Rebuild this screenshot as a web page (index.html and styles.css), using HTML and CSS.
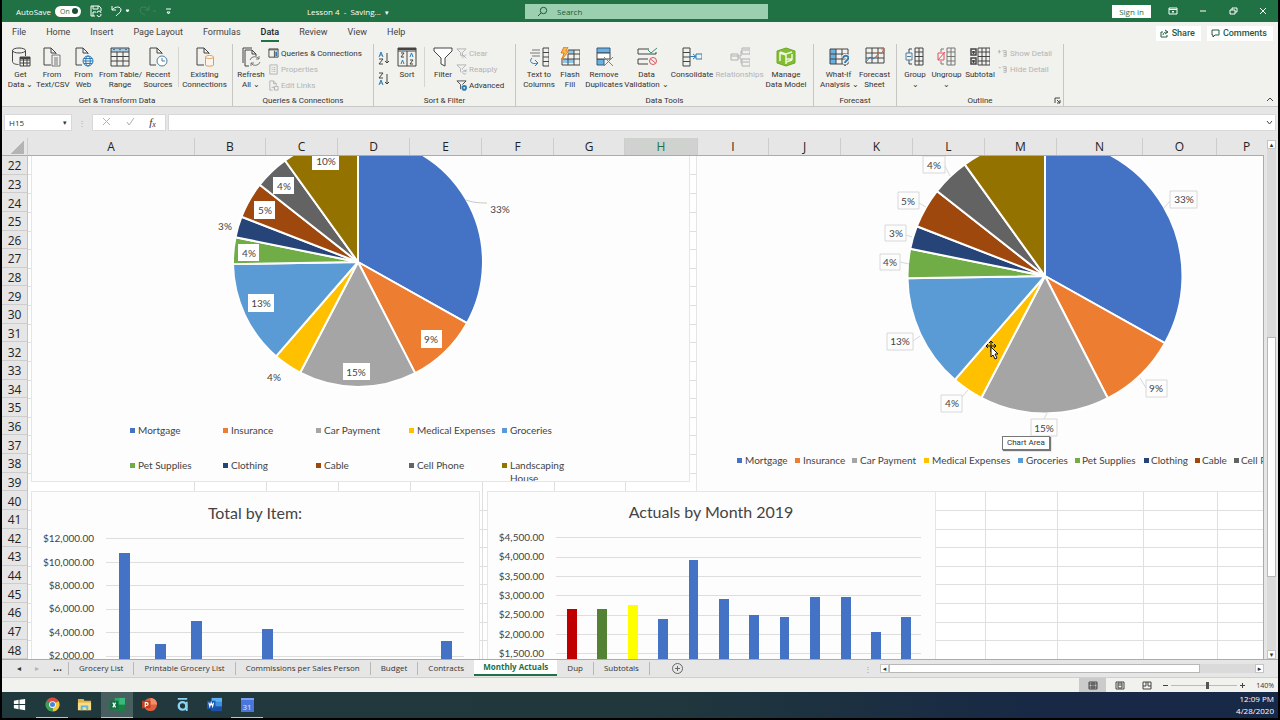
FILE: index.html
```
<!DOCTYPE html>
<html lang="en">

<head>
    <meta charset="UTF-8">
    <title>Lesson 4 - Excel</title>
    <link rel="stylesheet" href="styles.css">
</head>

<body>
    <header class="titlebar">
        <div class="quick-access">
            <label for="autosave">AutoSave</label>
            <span class="switch">On <input type="checkbox" id="autosave" checked></span>
            <button aria-label="Save"><svg width="12" height="12" viewBox="0 0 12 12"><path d="M1 1h8l2 2v3M1 1v10h4M3 1v3h5V1M3 11V7h3M7 8a2 2 0 0 1 4 0M11 9a2 2 0 0 1-4 1"/></svg></button>
            <button class="undo" aria-label="Undo"><svg width="19" height="12" viewBox="0 0 19 12"><path d="M1 1v4h4M1 5c3-4 9-4 9 0 0 3-4 4-5 6"/><path d="M15 5l1.500 2 1.500-2z" fill="#fff"/></svg></button>
            <button class="redo" aria-label="Redo" disabled><svg width="17" height="12" viewBox="0 0 17 12"><path d="M10 1v4H6M10 5C7 1 1 1 1 5c0 3 3 4 5 5M14 6h3"/></svg></button>
            <button aria-label="Customize"><svg width="7" height="7" viewBox="0 0 7 7"><path d="M1 1h5M2 4l1.500 2L5 4z"/></svg></button>
            <span class="doc-name">Lesson 4 &nbsp;-&nbsp; Saving... &nbsp;<small>▾</small></span>
        </div>
        <div class="search">
            <svg width="11" height="11" viewBox="0 0 11 11"><circle cx="6.500" cy="4.500" r="3.200"/><path d="M4 7l-3 3"/></svg>
            <input type="search" placeholder="Search" aria-label="Search">
        </div>
        <div class="window-controls">
            <button class="sign-in">Sign in</button>
            <button aria-label="Ribbon display options"><svg width="10" height="10" viewBox="0 0 10 10"><path d="M1 2h8v6H1zM1 3.500h8M5 7V5M4 6l1-1 1 1"/></svg></button>
            <button aria-label="Minimize"><svg width="10" height="10" viewBox="0 0 10 10"><path d="M2 5h6"/></svg></button>
            <button aria-label="Restore"><svg width="10" height="10" viewBox="0 0 10 10"><path d="M2 4h5v4H2zM4 4V2h5v4H7"/></svg></button>
            <button aria-label="Close"><svg width="10" height="10" viewBox="0 0 10 10"><path d="M2 2l6 6M8 2l-6 6"/></svg></button>
        </div>
    </header>

    <nav class="menu">
        <button>File</button>
        <button>Home</button>
        <button>Insert</button>
        <button>Page Layout</button>
        <button>Formulas</button>
        <button class="active">Data</button>
        <button>Review</button>
        <button>View</button>
        <button>Help</button>
        <div class="menu-right">
            <button class="share"><svg width="9" height="9" viewBox="0 0 9 9"><path d="M3 3H1v5h6V6M3 6c0-2 2-3 4-3M5 1l3 2-3 2"/></svg>Share</button>
            <button class="share"><svg width="9" height="9" viewBox="0 0 9 9"><path d="M1 1h7v5H4L2 8V6H1z"/></svg>Comments</button>
        </div>
    </nav>

    <div class="ribbon">
        <section class="group">
            <div class="tools tools-get">
                <button class="tool"><svg viewBox="0 0 20 20"><ellipse cx="8" cy="3.500" rx="6.500" ry="2.500"/><path d="M1.500 3.500v11c0 2 3 3 6 3M14.500 3.500V9"/><path d="M9 10h10v9H9zM9 13h10M9 16h10M12.500 10v9M16 10v9"/><path d="M9 11h10" stroke-width="2"/></svg>Get<br>Data <i>⌄</i></button>
                <button class="tool"><svg viewBox="0 0 20 20"><path d="M9 18H2V1h7l5 5v1M9 1v5h5"/><path class="gray" d="M10 8h8v11h-8zM12 11h4M12 13h4M12 15h4M12 17h4"/></svg>From<br>Text/CSV</button>
                <button class="tool"><svg viewBox="0 0 20 20"><path d="M8 18H2V1h7l5 5v1M9 1v5h5"/><g class="blue"><circle cx="14" cy="14" r="5"/><ellipse cx="14" cy="14" rx="2.200" ry="5"/><path d="M9 14h10M10 11.500h8M10 16.500h8"/></g></svg>From<br>Web</button>
                <button class="tool"><svg viewBox="0 0 20 20"><path fill="#a5cde8" stroke="none" d="M1 1h18v4H1z"/><path d="M1 1h18v18H1zM1 5h18M1 9.500h18M1 14h18M7 5v14M13 5v14"/><path class="blue" d="M3 2l1 1 1-1M9 2l1 1 1-1M15 2l1 1 1-1"/></svg>From Table/<br>Range</button>
                <button class="tool"><svg viewBox="0 0 20 20"><path d="M8 18H2V1h7l5 5v1M9 1v5h5"/><circle class="steel" cx="14" cy="14" r="5" fill="#fff"/><path class="steel" d="M14 11v3h3"/></svg>Recent<br>Sources</button>
                <span class="divider"></span>
                <button class="tool"><svg viewBox="0 0 20 20"><path d="M9 18H2V1h7l5 5v1M9 1v5h5"/><path d="M10.500 10v8c0 1.500 8 1.500 8 0v-8" stroke="#e59a4c" fill="#fbf4ec"/><ellipse cx="14.500" cy="10" rx="4" ry="1.500" stroke="#e59a4c" fill="#fff"/></svg>Existing<br>Connections</button>
            </div>
            <h2>Get &amp; Transform Data</h2>
        </section>
        <section class="group">
            <div class="tools tools-query">
                <button class="tool"><svg viewBox="0 0 20 20"><path d="M2 16V1h9M8 19H4V3h7l4 4v2M11 3v4h4"/><g class="gray"><path d="M9 13a5 5 0 0 1 9-1M18 9v3h-3M19 15a5 5 0 0 1-9 1M10 19v-3h3"/></g></svg>Refresh<br>All <i>⌄</i></button>
                <div class="small-tools">
                    <button><svg viewBox="0 0 12 12"><path d="M1 1h10v9H1zM1 2h10M7 3v7"/><path fill="#2b7cb8" stroke="none" d="M8 4h2v5H8z"/></svg>Queries &amp; Connections</button>
                    <button disabled><svg viewBox="0 0 12 12"><path d="M2 1h8v10H2zM4 4h1M4 6h1M4 8h1M6 4h2M6 6h2M6 8h2"/></svg>Properties</button>
                    <button disabled><svg viewBox="0 0 12 12"><path d="M5 11H2V1h4l3 3v2M4 8h3v3M7 7h4v4H7zM6 1v3h3"/></svg>Edit Links</button>
                </div>
            </div>
            <h2>Queries &amp; Connections</h2>
        </section>
        <section class="group">
            <div class="tools tools-sort">
                <div class="sort-pair">
                    <button aria-label="Sort A to Z"><svg viewBox="0 0 12 14"><path class="blue" d="M1 6l2-5 2 5M2 4h2"/><path d="M1 8h4l-4 5h4M9 2v10M7 10l2 2 2-2"/></svg></button>
                    <button aria-label="Sort Z to A"><svg viewBox="0 0 12 14"><path class="blue" d="M1 13l2-5 2 5M2 11h2"/><path d="M1 1h4L1 6h4M9 2v10M7 10l2 2 2-2"/></svg></button>
                </div>
                <button class="tool"><svg viewBox="0 0 20 20"><path d="M1 1h18v18H1zM1 4h18M10 4v15"/><path d="M1 2h18" stroke-width="2"/><path d="M4 6h3l-3 4h3M13 13h3l-3 4h3"/><path class="blue" d="M4 17l1.500-4L7 17M13 10l1.500-4 1.500 4"/></svg>Sort</button>
                <span class="divider"></span>
                <button class="tool"><svg viewBox="0 0 20 20"><path fill="#fff" d="M1 1h18v3l-7 7v8l-4-2v-6L1 4z"/></svg>Filter</button>
                <div class="small-tools">
                    <button disabled><svg viewBox="0 0 12 12"><path d="M1 1h10L7 5v4L5 8V5zM7 7l4 4M11 7l-4 4"/></svg>Clear</button>
                    <button disabled><svg viewBox="0 0 12 12"><path d="M1 1h10L7 5v1M5 9V5L1 1M11 8a2 2 0 1 0 0 2M11 6v2H9"/></svg>Reapply</button>
                    <button><svg viewBox="0 0 12 12"><path d="M1 1h10L7 5M5 10V5L1 1"/><circle cx="9" cy="8.500" r="2" stroke="#2b7cb8" stroke-width="2"/><path class="blue" d="M7 11h4"/></svg>Advanced</button>
                </div>
            </div>
            <h2>Sort &amp; Filter</h2>
        </section>
        <section class="group">
            <div class="tools tools-data">
                <button class="tool"><svg viewBox="0 0 20 20"><path class="gray" d="M3 3h8M1 6h10M3 9h8"/><path class="blue" d="M3 11c-4 4 1 7 6 5M6 13l3 3-3 3"/><path d="M14 1h6v18h-6zM14 5.500h6M14 10h6M14 14.500h6"/></svg>Text to<br>Columns</button>
                <button class="tool"><svg viewBox="0 0 20 20"><path fill="#8ec7ec" stroke="none" d="M8 3h6v4H8zM3 12h11v4H3z"/><path d="M2 11v7h18V3H8M3 12h17M8 7h12M8 7v11M14 3v15"/><path fill="#f7b84b" stroke="#df7d1e" d="M4 0h4L6 4h3l-7 8 2-6H1z"/></svg>Flash<br>Fill</button>
                <button class="tool"><svg viewBox="0 0 20 20"><path fill="#68b1e3" stroke="#37597a" d="M3 1h13v5H3zM3 12h7v6H3z"/><path d="M3 6h13v6H3z" fill="#fff"/><path class="red" d="M10 10l9 9M19 10l-9 9"/></svg>Remove<br>Duplicates</button>
                <button class="tool"><svg viewBox="0 0 20 20"><path d="M12 2H1v5h18V5M11 12H1v5h10"/><path d="M11 3l3 3 6-5" stroke="#3d8c6c"/><g class="red"><circle cx="16" cy="14" r="3.500"/><path d="M13.500 12l5 4"/></g></svg>Data<br>Validation <i>⌄</i></button>
                <button class="tool"><svg viewBox="0 0 20 20"><path d="M1 1h7v18H1zM1 5.500h7M1 10h7M1 14.500h7"/><path class="blue" d="M8 9.500h5M11 7l3 2.500-3 2.500M14 7h6v5h-6z"/></svg>Consolidate</button>
                <button class="tool" disabled><svg viewBox="0 0 20 20"><path d="M1 7h7v6H1zM12 1h8v6h-8zM12 12h8v7h-8zM8 9h3V4h1M8 11h3v5h1M13 3h6M13 15h6M1 9h7"/></svg>Relationships</button>
                <button class="tool"><svg viewBox="0 0 20 20"><path d="M1 4l9-3 9 3v12l-9 3-9-3z" fill="#83bd32" stroke="#6fa928"/><path stroke="#eef8df" stroke-width="1.500" d="M4 5l6 2 6-2M4 14V6l6 2v9M10 12h6V7M10 15l6-2"/></svg>Manage<br>Data Model</button>
            </div>
            <h2>Data Tools</h2>
        </section>
        <section class="group">
            <div class="tools tools-forecast">
                <button class="tool"><svg viewBox="0 0 20 20"><path fill="#68b1e3" stroke="none" d="M1 2h6v15H1z"/><path d="M1 2h18v15H1zM1 7h18M1 12h18M7 2v15M13 2v15"/><path stroke="#f1f1ee" stroke-width="4" d="M14 11c1-4 7-2 5 1-1 2-3 2-3 5"/><path class="blue" stroke-width="2" d="M14 11c1-4 7-2 5 1-1 2-3 2-3 4M16 18v1"/></svg>What-If<br>Analysis <i>⌄</i></button>
                <button class="tool"><svg viewBox="0 0 20 20"><path d="M1 1h18v15H1zM1 6h18M1 11h18M7 1v15M13 1v15"/><path class="blue" d="M1 15l4-5 3 2 4-3"/><path stroke="#d8664b" d="M11 10l3-5 2 2 3-5M16 2h3v3"/></svg>Forecast<br>Sheet</button>
            </div>
            <h2>Forecast</h2>
        </section>
        <section class="group">
            <div class="tools tools-outline">
                <button class="tool"><svg viewBox="0 0 20 20"><path d="M10 1h8v17h-8zM10 5h8M10 9.500h8M10 14h8M14 1v17M7 2H4v4M7 17H4v-4"/><path class="steel" d="M1 6h6v7H1zM2 9.500h4"/></svg>Group<br><i>⌄</i></button>
                <button class="tool"><svg viewBox="0 0 20 20"><path class="gray" d="M10 1h8v17h-8zM10 5h8M10 9.500h8M10 14h8M14 1v17M7 2H4v3M7 17H4v-3"/><path class="red" d="M1 6h6v7H1zM1 13l7-8"/></svg>Ungroup<br><i>⌄</i></button>
                <button class="tool"><svg viewBox="0 0 20 20"><path d="M8 1h12v17H8zM8 5h12M8 9.500h12M8 14h12M12 1v17M16 1v17"/><path d="M1 2h5v6H1zM1 11h5v6H1zM2 5h3M3.500 4v3M2 14h3M3.500 13v3" stroke-width="1.500"/></svg>Subtotal</button>
                <div class="small-tools">
                    <button disabled><svg viewBox="0 0 12 12"><path d="M1 4h3M2.500 2v4M6 3h4v2H7M10 5v4H7M7 7h3"/></svg>Show Detail</button>
                    <button disabled><svg viewBox="0 0 12 12"><path d="M2 4h2M6 3h4v2H7M10 5v4H7M7 7h3"/></svg>Hide Detail</button>
                </div>
            </div>
            <h2>Outline</h2>
            <button class="launcher" aria-label="Outline settings"><svg width="7" height="7" viewBox="0 0 7 7"><path d="M6 1H1v5M3 3l3 3M6 3v3H3"/></svg></button>
        </section>
        <button class="collapse" aria-label="Collapse the ribbon"><svg width="8" height="6" viewBox="0 0 8 6"><path d="M1 5l3-3 3 3"/></svg></button>
    </div>

    <div class="formula-bar">
        <div class="name-box">
            <input type="text" value="H15" aria-label="Name box">
            <small>▾</small>
        </div>
        <span class="grip">⋮</span>
        <div class="formula-buttons">
            <button aria-label="Cancel" disabled><svg width="9" height="9" viewBox="0 0 9 9"><path d="M1 1l7 7M8 1L1 8"/></svg></button>
            <button aria-label="Enter" disabled><svg width="9" height="9" viewBox="0 0 9 9"><path d="M1 5l2 3 5-7"/></svg></button>
            <button class="fx">f<sub>x</sub></button>
        </div>
        <div class="formula">
            <input type="text" aria-label="Formula">
            <svg width="7" height="6" viewBox="0 0 7 6"><path d="M1 1l2.500 3L6 1"/></svg>
        </div>
    </div>

    <main class="workbook">
        <div class="corner"></div>
        <div class="columns">
            <span>A</span><span>B</span><span>C</span><span>D</span><span>E</span><span>F</span><span>G</span><span class="selected">H</span><span>I</span><span>J</span><span>K</span><span>L</span><span>M</span><span>N</span><span>O</span><span>P</span>
        </div>
        <div class="scroll-y">
            <button aria-label="Scroll up">▴</button>
            <div class="track"><div class="thumb"></div></div>
            <button aria-label="Scroll down">▾</button>
        </div>
        <div class="rows">
            <span>22</span><span>23</span><span>24</span><span>25</span><span>26</span><span>27</span><span>28</span><span>29</span><span>30</span>
            <span>31</span><span>32</span><span>33</span><span>34</span><span>35</span><span>36</span><span>37</span><span>38</span><span>39</span>
            <span>40</span><span>41</span><span>42</span><span>43</span><span>44</span><span>45</span><span>46</span><span>47</span><span>48</span>
        </div>
        <div class="sheet">
            <svg class="gridlines" width="1236" height="503" viewBox="28 156 1236 503">
                <path d="M28 174H1264M28 193H1264M28 212H1264M28 231H1264M28 249H1264M28 268H1264M28 286H1264M28 305H1264M28 324H1264M28 342H1264M28 361H1264M28 380H1264M28 398H1264M28 417H1264M28 435H1264M28 454H1264M28 473H1264M28 510H1264M28 529H1264M28 547H1264M28 566H1264M28 584H1264M28 603H1264M28 622H1264M28 640H1264"/>
                <path d="M194 156V659M266 156V659M338 156V659M410 156V659M482 156V659M554 156V659M625 156V659M697 156V659M769 156V659M841 156V659M913 156V659M985 156V659M1057 156V659M1143 156V659M1217 156V659"/>
            </svg>

            <!-- pie, labels with white boxes -->
            <svg class="chart chart-pie-left" width="657" height="325" viewBox="32 156 657 325">
                <defs>
                    <g id="slices" class="slices">
                        <path fill="#4472c4" d="M0 0V-100A100 100 0 0 1 87.200 48.900Z"/>
                        <path fill="#ed7d31" d="M0 0L87.200 48.900A100 100 0 0 1 45.700 88.900Z"/>
                        <path fill="#a5a5a5" d="M0 0L45.700 88.900A100 100 0 0 1 -46.300 88.600Z"/>
                        <path fill="#ffc000" d="M0 0L-46.300 88.600A100 100 0 0 1 -65.600 75.500Z"/>
                        <path fill="#5b9bd5" d="M0 0L-65.600 75.500A100 100 0 0 1 -100 1.700Z"/>
                        <path fill="#70ad47" d="M0 0L-100 1.700A100 100 0 0 1 -98 -19.800Z"/>
                        <path fill="#264478" d="M0 0L-98 -19.800A100 100 0 0 1 -93.200 -36.200Z"/>
                        <path fill="#9e480e" d="M0 0L-93.200 -36.200A100 100 0 0 1 -78.600 -61.800Z"/>
                        <path fill="#636363" d="M0 0L-78.600 -61.800A100 100 0 0 1 -58.400 -81.200Z"/>
                        <path fill="#937200" d="M0 0L-58.400 -81.200A100 100 0 0 1 0 -100Z"/>
                    </g>
                </defs>
                <use href="#slices" transform="translate(358 262) scale(1.250)"/>
                <path class="leader" d="M466 200c5 2 12 3 21 3"/>
                <g class="tags">
                    <path d="M312 152h27v18h-27zM273 177h21v17h-21zM254 201h21v18h-21zM238 244h21v17h-21zM248 294h26v18h-26zM343 363h27v17h-27zM421 330h21v18h-21z"/>
                </g>
                <g class="labels">
                    <text x="326" y="165">10%</text>
                    <text x="284" y="190">4%</text>
                    <text x="265" y="214">5%</text>
                    <text x="225" y="230">3%</text>
                    <text x="249" y="257">4%</text>
                    <text x="261" y="307">13%</text>
                    <text x="274" y="381">4%</text>
                    <text x="356" y="376">15%</text>
                    <text x="431" y="343">9%</text>
                    <text x="500" y="213">33%</text>
                </g>
                <g class="legend">
                    <rect x="130" y="428" fill="#4472c4"/><text x="138" y="434">Mortgage</text>
                    <rect x="223" y="428" fill="#ed7d31"/><text x="231" y="434">Insurance</text>
                    <rect x="316" y="428" fill="#a5a5a5"/><text x="324" y="434">Car Payment</text>
                    <rect x="409" y="428" fill="#ffc000"/><text x="417" y="434">Medical Expenses</text>
                    <rect x="502" y="428" fill="#5b9bd5"/><text x="510" y="434">Groceries</text>
                    <rect x="130" y="463" fill="#70ad47"/><text x="138" y="469">Pet Supplies</text>
                    <rect x="223" y="463" fill="#264478"/><text x="231" y="469">Clothing</text>
                    <rect x="316" y="463" fill="#9e480e"/><text x="324" y="469">Cable</text>
                    <rect x="409" y="463" fill="#636363"/><text x="417" y="469">Cell Phone</text>
                    <rect x="502" y="463" fill="#937200"/><text x="510" y="469">Landscaping<tspan x="510" y="482">House</tspan></text>
                </g>
            </svg>

            <!-- pie, labels as callouts -->
            <svg class="chart chart-pie-right" width="680" height="335" viewBox="697 156 680 335">
                <use href="#slices" transform="translate(1045 276) scale(1.375)"/>
                <g class="callouts">
                    <path d="M923 156h22v17h-22zM945 166l5 10M898 192h21v17h-21zM919 203l7 4M885 225h21v16h-21zM906 235l6 2M880 254h20v16h-20zM900 262l9 2M887 333h26v17h-26zM913 341l7-5M941 395h21v17h-21zM962 397l6-7M1031 419h26v17h-26zM1044 419l3-6M1146 380h21v17h-21zM1146 388l-6-10M1170 191h27v17h-27zM1170 201l-6 7"/>
                </g>
                <g class="labels">
                    <text x="934" y="169">4%</text>
                    <text x="908" y="205">5%</text>
                    <text x="896" y="237">3%</text>
                    <text x="890" y="266">4%</text>
                    <text x="900" y="345">13%</text>
                    <text x="952" y="407">4%</text>
                    <text x="1044" y="432">15%</text>
                    <text x="1156" y="392">9%</text>
                    <text x="1184" y="203">33%</text>
                </g>
                <g class="legend">
                    <rect x="737" y="458" fill="#4472c4"/><text x="745" y="464">Mortgage</text>
                    <rect x="795" y="458" fill="#ed7d31"/><text x="803" y="464">Insurance</text>
                    <rect x="852" y="458" fill="#a5a5a5"/><text x="860" y="464">Car Payment</text>
                    <rect x="924" y="458" fill="#ffc000"/><text x="932" y="464">Medical Expenses</text>
                    <rect x="1018" y="458" fill="#5b9bd5"/><text x="1026" y="464">Groceries</text>
                    <rect x="1075" y="458" fill="#70ad47"/><text x="1082" y="464">Pet Supplies</text>
                    <rect x="1144" y="458" fill="#264478"/><text x="1151" y="464">Clothing</text>
                    <rect x="1195" y="458" fill="#9e480e"/><text x="1202" y="464">Cable</text>
                    <rect x="1234" y="458" fill="#636363"/><text x="1241" y="464">Cell Phone</text>
                </g>
            </svg>

            <svg class="chart chart-item" width="447" height="167" viewBox="32 492 447 167">
                <text class="chart-title" x="255" y="519">Total by Item:</text>
                <path class="axis" d="M106 538H464M106 562H464M106 585H464M106 609H464M106 632H464M106 656H464"/>
                <g class="values">
                    <text x="94" y="542">$12,000.00</text>
                    <text x="94" y="566">$10,000.00</text>
                    <text x="94" y="589">$8,000.00</text>
                    <text x="94" y="612">$6,000.00</text>
                    <text x="94" y="636">$4,000.00</text>
                    <text x="94" y="659">$2,000.00</text>
                </g>
                <path fill="#4472c4" d="M119 553h11v110h-11zM155 644h11v20h-11zM191 621h11v40h-11zM262 629h11v40h-11zM441 641h11v30h-11z"/>
            </svg>

            <svg class="chart chart-month" width="447" height="167" viewBox="488 492 447 167">
                <text class="chart-title" x="711" y="518">Actuals by Month 2019</text>
                <path class="axis" d="M556 537H921M556 557H921M556 576H921M556 595H921M556 615H921M556 634H921M556 653H921"/>
                <g class="values">
                    <text x="544" y="541">$4,500.00</text>
                    <text x="544" y="560">$4,000.00</text>
                    <text x="544" y="580">$3,500.00</text>
                    <text x="544" y="599">$3,000.00</text>
                    <text x="544" y="618">$2,500.00</text>
                    <text x="544" y="638">$2,000.00</text>
                    <text x="544" y="657">$1,500.00</text>
                </g>
                <path fill="#c00000" d="M567 609h10v60h-10z"/>
                <path fill="#548235" d="M597 609h10v60h-10z"/>
                <path fill="#ffff00" d="M628 605h10v60h-10z"/>
                <path fill="#4472c4" d="M658 619h10v60h-10zM689 560h9v110h-9zM719 599h10v70h-10zM749 615h10v60h-10zM780 617h9v60h-9zM810 597h10v70h-10zM841 597h10v70h-10zM871 632h10v40h-10zM901 617h10v60h-10z"/>
            </svg>

            <div class="tooltip">Chart Area</div>
            <svg class="cursor" width="16" height="20" viewBox="0 0 16 20">
                <path d="M6 1v11M1 6h10M4 3l2-2 2 2M3 4L1 6l2 2M9 4l2 2-2 2" stroke="#111"/>
                <path d="M6 7v10l2-2 2 4 2-1-2-4h3z" fill="#fff" stroke="#111"/>
            </svg>
        </div>
    </main>

    <div class="sheet-tabs">
        <div class="tab-nav">
            <button aria-label="Previous sheet">◂</button>
            <button aria-label="Next sheet" disabled>▸</button>
            <button aria-label="More sheets"><b>...</b></button>
        </div>
        <button class="tab">Grocery List</button>
        <button class="tab">Printable Grocery List</button>
        <button class="tab">Commissions per Sales Person</button>
        <button class="tab">Budget</button>
        <button class="tab">Contracts</button>
        <button class="tab active">Monthly Actuals</button>
        <button class="tab">Dup</button>
        <button class="tab">Subtotals</button>
        <button class="add" aria-label="New sheet"><svg width="11" height="11" viewBox="0 0 11 11"><circle cx="5.500" cy="5.500" r="5"/><path d="M3 5.500h5M5.500 3v5"/></svg></button>
        <span class="grip">⋮</span>
        <div class="scroll-x">
            <button aria-label="Scroll left">◂</button>
            <div class="track"><div class="thumb"></div></div>
            <button aria-label="Scroll right">▸</button>
        </div>
    </div>

    <div class="statusbar">
        <button class="view active" aria-label="Normal"><svg width="10" height="9" viewBox="0 0 10 9"><path d="M1 1h8v7H1zM1 3h8M1 6h8M4 1v7M6 1v7"/></svg></button>
        <button class="view" aria-label="Page layout"><svg width="10" height="9" viewBox="0 0 10 9"><path d="M1 1h8v7H1zM3 2h4v5H3zM3 4h4"/></svg></button>
        <button class="view" aria-label="Page break preview"><svg width="10" height="9" viewBox="0 0 10 9"><path d="M1 1h8v7H1zM4 1v4H1M6 1v4h3"/></svg></button>
        <button class="zoom-step" aria-label="Zoom out"><svg width="7" height="7" viewBox="0 0 7 7"><path d="M1 3.500h5"/></svg></button>
        <input type="range" min="0" max="100" value="55" aria-label="Zoom">
        <button class="zoom-step" aria-label="Zoom in"><svg width="7" height="7" viewBox="0 0 7 7"><path d="M1 3.500h5M3.500 1v5"/></svg></button>
        <span class="zoom-value">140%</span>
    </div>

    <footer class="taskbar">
        <button aria-label="Start"><svg viewBox="0 0 16 16"><path fill="#fff" d="M2 4l5-1v4.500H2zM8 3l6-1v5.500H8zM2 8.500h5V13l-5-1zM8 8.500h6V14l-6-1z"/></svg></button>
        <button class="running" aria-label="Chrome"><svg viewBox="0 0 16 16"><path fill="#dc4b3e" d="M8 8L1.500 4.200a7.500 7.500 0 0 1 13 0z"/><path fill="#f5c73d" d="M8 8l6.500-3.800A7.500 7.500 0 0 1 8 15.500z"/><path fill="#3f9f57" d="M8 8v7.500A7.500 7.500 0 0 1 1.500 4.200z"/><circle cx="8" cy="8" r="3.600" fill="#fff"/><circle cx="8" cy="8" r="2.700" fill="#4a86dc"/></svg></button>
        <button aria-label="File Explorer"><svg viewBox="0 0 16 16"><path fill="#e3b448" d="M1 2h6l1 2h7v10H1z"/><path fill="#f8dd84" d="M1 6h14v8H1z"/><path fill="#5fb5dd" d="M4 9h8v5h-2v-3H6v3H4z"/></svg></button>
        <button class="running current" aria-label="Excel"><svg viewBox="0 0 16 16"><path fill="#2fa868" d="M5 1h11v14H5z"/><path fill="#1c7f48" d="M5 8h11v7H5z"/><path fill="#36bb78" d="M10 1h6v7h-6z"/><path fill="#127040" d="M0 4h9v9H0z"/><path d="M3 6l3 5M6 6l-3 5" stroke="#fff" stroke-width="1.300"/></svg></button>
        <button aria-label="PowerPoint"><svg viewBox="0 0 16 16"><circle cx="9" cy="8" r="7" fill="#e2603d"/><path fill="#f18f69" d="M9 1a7 7 0 0 1 7 7H9z"/><path fill="#c43e1c" d="M0 4h9v8H0z"/><path d="M3.500 11V6H5a1.500 1.500 0 0 1 0 3H3.500" stroke="#fff" stroke-width="1.200" fill="none"/></svg></button>
        <button aria-label="Dictation"><svg viewBox="0 0 16 16"><circle cx="8" cy="9.500" r="4" fill="none" stroke="#8bd3f0" stroke-width="2.500"/><path d="M3 2h10M12.500 5v10" stroke="#8bd3f0" stroke-width="2"/></svg></button>
        <button aria-label="Word"><svg viewBox="0 0 16 16"><path fill="#3f8fdf" d="M5 1h11v14H5z"/><path fill="#5fb0f0" d="M5 1h11v4H5z"/><path fill="#1c4fa5" d="M5 10h11v5H5z"/><path fill="#1856b5" d="M0 4h9v9H0z"/><path d="M2 6l1 4 1.500-4L6 10l1-4" stroke="#fff" stroke-width="1.200" fill="none"/></svg></button>
        <button class="running calendar" aria-label="Calendar"><span>31</span></button>
        <div class="clock"><span>12:09 PM</span><span>4/28/2020</span></div>
    </footer>
</body>

</html>
```
FILE: styles.css
```
* {
    box-sizing: border-box;
}

body {
    margin: 0;
    padding: 0 2px 2px;
    height: 100vh;
    display: flex;
    flex-direction: column;
    overflow: hidden;
    background: #000;
    font-family: "Open Sans", sans-serif;
    font-size: 8px;
    color: #333;
}

button,
input {
    font: inherit;
    color: inherit;
    background: none;
    border: none;
    padding: 0;
    margin: 0;
    outline: none;
}

svg {
    fill: none;
    stroke: #444;
    flex-shrink: 0;
}

.blue {
    stroke: #2b7cb8;
}

.steel {
    stroke: #4d7f9f;
}

.gray {
    stroke: #777;
}

.red {
    stroke: #e05460;
}

/* title bar */
.titlebar {
    height: 22px;
    flex-shrink: 0;
    display: grid;
    grid-template-columns: 523fr 243fr 510fr;
    align-items: center;
    background: #207245;
    color: #fff;
}

.titlebar svg {
    stroke: #fff;
    display: block;
}

.quick-access {
    display: flex;
    align-items: center;
    padding: 0 136px 0 14px;
    gap: 9px;
}

.quick-access label {
    margin-right: -5px;
}

.switch {
    width: 26px;
    height: 11px;
    padding: 0 3px 0 5px;
    border-radius: 6px;
    background: #fff;
    color: #207245;
    font-size: 7px;
    display: flex;
    align-items: center;
    justify-content: space-between;
}

.switch input {
    appearance: none;
    width: 6px;
    height: 6px;
    border-radius: 50%;
    background: #1c5035;
}

.redo {
    opacity: 0.25;
}

.doc-name {
    margin-left: auto;
    white-space: nowrap;
}

.search {
    display: flex;
    align-items: center;
    gap: 9px;
    height: 15px;
    padding: 0 12px;
    background: #9ccfb0;
    color: #1b5c38;
}

.search svg {
    stroke: #1b5c38;
}

.search input {
    flex: 1;
}

.search input::placeholder {
    color: #1b5c38;
}

.window-controls {
    display: flex;
    justify-content: flex-end;
    align-items: center;
    gap: 20px;
    padding-right: 10px;
}

.window-controls .sign-in {
    width: 39px;
    height: 13px;
    margin-right: -3px;
    background: #fff;
    color: #207245;
}

/* ribbon tabs */
.menu {
    height: 22px;
    flex-shrink: 0;
    display: flex;
    align-items: center;
    gap: 20px;
    padding: 0 5px 0 10px;
    background: #f1f1ee;
    font-family: Roboto, sans-serif;
    font-size: 9px;
}

.menu button {
    height: 18px;
    color: #444;
    border-bottom: 2px solid transparent;
}

.menu .active {
    color: #222;
    font-weight: 500;
    border-bottom-color: #207245;
}

.menu-right {
    margin-left: auto;
    display: flex;
    gap: 6px;
}

.menu .share {
    height: 15px;
    padding: 0 6px 0 4px;
    display: flex;
    align-items: center;
    gap: 3px;
    border: none;
    background: #fff;
    color: #245c40;
    font-weight: 500;
}

.share svg {
    stroke: #245c40;
}

/* ribbon */
.ribbon {
    height: 63px;
    flex-shrink: 0;
    display: flex;
    background: #f1f1ee;
    border-bottom: 1px solid #c8c8c6;
    font-family: Roboto, sans-serif;
}

.group {
    position: relative;
    display: flex;
    flex-direction: column;
    justify-content: space-between;
    border-right: 1px solid #c6c6c4;
}

.group h2 {
    margin: 0;
    font-size: 8px;
    font-weight: 400;
    line-height: 10px;
    text-align: center;
}

.tools {
    display: grid;
    align-items: start;
}

.tools-get {
    grid-template-columns: 31px 32px 31px 42px 34px 6px 47px;
    padding: 0 4px 0 3px;
}

.tools-query {
    grid-template-columns: 34px 104px;
    padding: 0 1px;
}

.tools-sort {
    grid-template-columns: 17px 24px 11px 26px 59px;
    padding-left: 4px;
}

.tools-data {
    grid-template-columns: 34px 28px 40px 45px 46px 49px 44px;
    padding: 0 5px 0 6px;
}

.tools-forecast {
    grid-template-columns: 37px 35px;
    padding: 0 4px 0 6px;
}

.tools-outline {
    grid-template-columns: 30px 33px 34px 66px;
    padding-left: 3px;
}

.tool {
    display: flow-root;
    line-height: 10px;
    text-align: center;
    white-space: nowrap;
}

.tool svg {
    display: block;
    width: 20px;
    height: 20px;
    margin: 3px auto;
}

.tool i {
    font-style: normal;
}

button:disabled {
    color: #b4b4b4;
}

button:disabled svg {
    stroke: #b0b0b0;
}

.divider {
    width: 1px;
    height: 40px;
    margin: 3px auto 0;
    background: #d4d4d2;
}

.small-tools {
    display: flex;
    flex-direction: column;
    padding-top: 1px;
}

.small-tools button {
    display: flex;
    align-items: center;
    gap: 2px;
    height: 16px;
    white-space: nowrap;
}

.small-tools svg {
    width: 11px;
    height: 11px;
}

.sort-pair {
    display: flex;
    flex-direction: column;
    gap: 7px;
    padding-top: 7px;
}

.sort-pair button {
    display: flex;
}

.sort-pair svg {
    width: 12px;
    height: 14px;
}

.launcher {
    position: absolute;
    right: 2px;
    bottom: 0;
}

.collapse {
    margin-left: auto;
    align-self: flex-end;
    padding: 0 4px 2px 0;
}

/* formula bar */
.formula-bar {
    height: 31px;
    flex-shrink: 0;
    display: flex;
    align-items: flex-start;
    padding: 7px 2px 0;
    background: #e6e6e6;
}

.name-box,
.formula-buttons,
.formula {
    height: 17px;
    display: flex;
    align-items: center;
    background: #fff;
    border: 1px solid #d8d8d8;
}

.name-box {
    width: 68px;
    padding: 0 4px;
}

.name-box input {
    flex: 1;
    min-width: 0;
}

.formula-bar .grip {
    width: 20px;
    text-align: center;
    line-height: 17px;
    color: #aaa;
}

.formula-buttons {
    width: 74px;
    justify-content: space-around;
    padding: 0 2px;
}

.fx {
    font-family: "Liberation Serif", serif;
    font-style: italic;
    font-size: 11px;
}

.fx sub {
    font-size: 8px;
    vertical-align: -1px;
}

.formula {
    flex: 1;
    margin-left: 2px;
    padding: 0 2px;
}

.formula input {
    flex: 1;
}

/* workbook */
.workbook {
    flex: 1;
    min-height: 0;
    display: grid;
    grid-template-columns: 26px 1fr 14px;
    grid-template-rows: 18px 1fr;
    background: #e6e6e6;
}

.corner {
    background: linear-gradient(135deg, transparent 50%, #b4b4b4 50%) no-repeat 9px 3px / 13px 13px;
    border-right: 1px solid #cfcfcf;
    border-bottom: 1px solid #ababab;
}

.columns {
    display: grid;
    grid-template-columns: 167px 71px 72px 72px 72px 72px 71px 73px 71px 72px 72px 72px 72px 86px 74px 60px;
    overflow: hidden;
    border-bottom: 1px solid #ababab;
}

.columns span {
    font-size: 12px;
    line-height: 18px;
    text-align: center;
    color: #222;
    border-right: 1px solid #cdcdcd;
}

.columns .selected {
    background: #d0d2d0;
    color: #207245;
    border-bottom: 1px solid #207245;
}

.rows {
    display: flex;
    flex-direction: column;
    min-height: 0;
    border-right: 1px solid #c4c4c4;
}

.rows span {
    flex: 1;
    min-height: 0;
    padding-top: 3px;
    display: flex;
    align-items: center;
    justify-content: center;
    font-size: 12px;
    line-height: 14px;
    color: #222;
    border-bottom: 1px solid #cdcdcd;
}

.sheet {
    position: relative;
    overflow: hidden;
    background: #fff;
    border-right: 1px solid #ababab;
}

.gridlines {
    display: block;
    stroke: #dfdfdf;
    shape-rendering: crispEdges;
}

/* charts float freely over the cells */
.chart {
    position: absolute;
    background: #fdfdfd;
    outline: 1px solid #e6e6e6;
    stroke: none;
    font-family: Lato, sans-serif;
    font-size: 10px;
}

.chart-pie-left {
    left: 4px;
    top: 0;
}

.chart-pie-right {
    left: 669px;
    top: 0;
}

.chart-item {
    left: 4px;
    top: 336px;
}

.chart-month {
    left: 460px;
    top: 336px;
}

.chart text {
    fill: #444;
}

.slices path {
    stroke: #fff;
    stroke-width: 2px;
    stroke-linejoin: round;
    vector-effect: non-scaling-stroke;
}

.labels {
    text-anchor: middle;
}

.values {
    text-anchor: end;
}

.tags path {
    fill: #fff;
}

.callouts path {
    stroke: #d8d8d8;
    fill: none;
}

.leader {
    stroke: #c8c8c8;
}

.legend rect {
    width: 5px;
    height: 5px;
}

.axis {
    stroke: #dedede;
    shape-rendering: crispEdges;
}

.chart .chart-title {
    font-size: 16px;
    text-anchor: middle;
}

.tooltip {
    position: absolute;
    left: 974px;
    top: 280px;
    padding: 0 4px;
    line-height: 12px;
    background: #fff;
    border: 1px solid #777;
    box-shadow: 1px 1px 1px #777;
    font-family: Roboto, sans-serif;
}

.cursor {
    position: absolute;
    left: 957px;
    top: 184px;
}

/* scrollbars */
.scroll-y {
    grid-column: 3;
    grid-row: 1 / 3;
    display: flex;
    flex-direction: column;
    padding: 2px 2px 0 3px;
}

.scroll-y button,
.scroll-x button {
    width: 9px;
    height: 9px;
    line-height: 8px;
    background: #fff;
    border: 1px solid #c4c4c4;
    font-family: "DejaVu Sans", sans-serif;
    font-size: 7px;
}

.track {
    flex: 1;
    background: #dadada;
}

.scroll-y .thumb {
    height: 48%;
    margin-top: 188px;
    background: #fff;
    border: 1px solid #b8b8b8;
}

.scroll-x {
    width: 384px;
    margin-right: 14px;
    display: flex;
}

.scroll-x .thumb {
    width: 85%;
    height: 9px;
    background: #fff;
    border: 1px solid #b8b8b8;
}

.corner,
.rows {
    grid-column: 1;
}

.columns,
.sheet {
    grid-column: 2;
}

.corner,
.columns {
    grid-row: 1;
}

.rows,
.sheet {
    grid-row: 2;
}

/* sheet tabs */
.sheet-tabs {
    height: 19px;
    flex-shrink: 0;
    display: flex;
    align-items: center;
    padding-bottom: 1px;
    background: #e6e6e6;
    border-top: 1px solid #ababab;
    border-bottom: 1px solid #cfcfcf;
}

.tab-nav {
    display: flex;
    justify-content: space-between;
    width: 66px;
    padding: 0 6px 0 15px;
    font-family: "DejaVu Sans", sans-serif;
}

.tab {
    height: 13px;
    padding: 0 10px;
    line-height: 12px;
    white-space: nowrap;
    border-left: 1px solid #b8b8b8;
}

.tab.active {
    align-self: stretch;
    height: 16px;
    padding: 0 9px;
    background: #fff;
    color: #207245;
    font-weight: 700;
    border-left: none;
    border-bottom: 2px solid #207245;
}

.tab.active + .tab {
    border-left: none;
}

.add {
    display: flex;
    height: 13px;
    align-items: center;
    padding-left: 22px;
    border-left: 1px solid #b8b8b8;
}

.add svg {
    stroke: #666;
}

.sheet-tabs .grip {
    margin-left: auto;
    padding-right: 8px;
    color: #999;
}

/* status bar */
.statusbar {
    height: 14px;
    flex-shrink: 0;
    display: flex;
    justify-content: flex-end;
    align-items: center;
    padding-right: 4px;
    background: #f1f1ee;
}

.view {
    width: 27px;
    height: 14px;
    display: flex;
    align-items: center;
    justify-content: center;
}

.view.active {
    background: #cbcbcb;
}

.zoom-step {
    display: flex;
    padding: 0 2px;
}

.statusbar input {
    appearance: none;
    width: 66px;
    height: 1px;
    background: #bbb;
}

.statusbar input::-webkit-slider-thumb {
    appearance: none;
    width: 3px;
    height: 7px;
    background: #555;
}

.zoom-value {
    width: 26px;
    font-size: 7px;
    text-align: right;
}

/* taskbar */
.taskbar {
    height: 26px;
    flex-shrink: 0;
    display: flex;
    padding: 0 4px 0 1px;
    background: linear-gradient(90deg, #20393c 0%, #20383c 50%, #182945 80%, #182848 100%);
}

.taskbar button {
    width: 32px;
    margin-right: 1px;
    display: flex;
    align-items: center;
    justify-content: center;
    border-bottom: 1px solid transparent;
}

.taskbar button:nth-child(even) {
    margin-right: 0;
}

.taskbar svg {
    width: 15px;
    height: 15px;
    stroke: none;
}

.taskbar .running {
    border-bottom-color: #a8c8dc;
}

.taskbar .current {
    background: #47605f;
}

.calendar span {
    width: 13px;
    height: 14px;
    line-height: 14px;
    background: #4a76dc;
    border-top: 2px solid #7ba0f0;
    color: #dfe8ff;
    font-size: 8px;
}

.clock {
    margin-left: auto;
    display: flex;
    flex-direction: column;
    justify-content: center;
    text-align: right;
    line-height: 12px;
    color: #fff;
}
```
